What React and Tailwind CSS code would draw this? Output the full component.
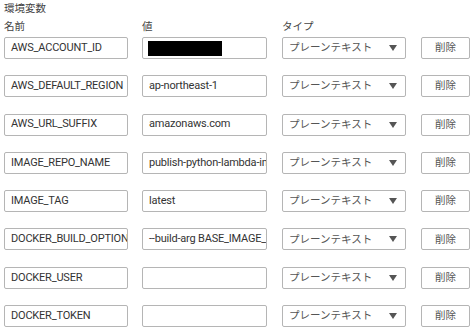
import React from "react";

const rows = [
  ["AWS_ACCOUNT_ID", null],
  ["AWS_DEFAULT_REGION", "ap-northeast-1"],
  ["AWS_URL_SUFFIX", "amazonaws.com"],
  ["IMAGE_REPO_NAME", "publish-python-lambda-image"],
  ["IMAGE_TAG", "latest"],
  ["DOCKER_BUILD_OPTIONS", "--build-arg BASE_IMAGE_TAG"],
  ["DOCKER_USER", ""],
  ["DOCKER_TOKEN", ""],
];

const font = { fontFamily: 'Roboto, "Noto Sans CJK JP", sans-serif' };

export default function App() {
  return (
    <div className="w-[474px] h-[333px] bg-white overflow-hidden pl-[4px] pt-[2px] text-[#333]" style={font}>
      <div className="text-[10.5px] leading-[14px] text-[#444]">環境変数</div>
      <div className="flex mt-[4px] text-[10.5px] leading-[14px] text-[#444]">
        <div className="w-[138px]">名前</div>
        <div className="w-[140px]">値</div>
        <div>タイプ</div>
      </div>
      <div className="flex flex-col gap-[16.3px] mt-[3px]">
        {rows.map(([name, value], i) => (
          <div key={i} className="flex items-center h-[22px]">
            <div className="w-[124px] h-[22px] border border-[#b5b5b5] rounded-[2px] flex items-center px-[6px] text-[11px] tracking-[-0.2px] whitespace-nowrap overflow-hidden">
              {name}
            </div>
            <div className="ml-[14px] w-[125px] h-[22px] border border-[#b5b5b5] rounded-[2px] flex items-center px-[6px] text-[11px] tracking-[-0.2px] whitespace-nowrap overflow-hidden">
              {value === null ? (
                <div className="w-[74px] h-[15px] bg-black -ml-[1px] shrink-0" />
              ) : (
                value
              )}
            </div>
            <div className="ml-[15px] w-[124px] h-[22px] border border-[#b5b5b5] rounded-[2px] flex items-center pl-[6px] pr-[8px] text-[10.5px] text-[#555] whitespace-nowrap">
              <span className="flex-1">プレーンテキスト</span>
              <svg width="8" height="6" viewBox="0 0 8 6">
                <path d="M0 0 H8 L4 6 Z" fill="#555" />
              </svg>
            </div>
            <div className="ml-[15px] w-[49px] h-[22px] border border-[#b5b5b5] rounded-[2px] flex items-center justify-center text-[10.5px] text-[#555]">
              削除
            </div>
          </div>
        ))}
      </div>
    </div>
  );
}
